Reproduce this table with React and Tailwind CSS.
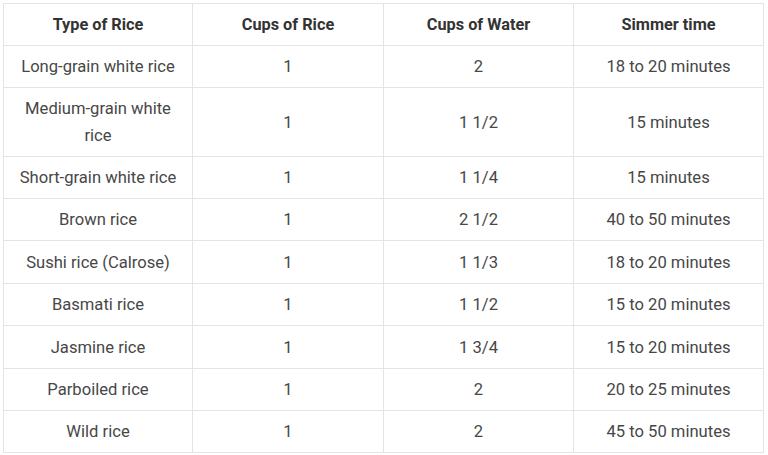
import React from "react";

const rows = [
  ["Long-grain white rice", "1", "2", "18 to 20 minutes"],
  ["Medium-grain white rice", "1", "1 1/2", "15 minutes"],
  ["Short-grain white rice", "1", "1 1/4", "15 minutes"],
  ["Brown rice", "1", "2 1/2", "40 to 50 minutes"],
  ["Sushi rice (Calrose)", "1", "1 1/3", "18 to 20 minutes"],
  ["Basmati rice", "1", "1 1/2", "15 to 20 minutes"],
  ["Jasmine rice", "1", "1 3/4", "15 to 20 minutes"],
  ["Parboiled rice", "1", "2", "20 to 25 minutes"],
  ["Wild rice", "1", "2", "45 to 50 minutes"],
];

const heights = ["h-[42px]", "h-[69px]", "h-[42px]", "h-[42px]", "h-[43px]", "h-[42px]", "h-[43px]", "h-[42px]", "h-[42px]"];

export default function App() {
  return (
    <div className="w-[768px] h-[455px] bg-white pt-[3px] pl-[3px] overflow-hidden" style={{ fontFamily: "Roboto, 'Liberation Sans', sans-serif" }}>
      <table className="w-[760px] table-fixed border-collapse text-[16.6px] text-[#474747]">
        <colgroup>
          <col className="w-[189px]" />
          <col className="w-[191px]" />
          <col className="w-[190px]" />
          <col className="w-[190px]" />
        </colgroup>
        <thead>
          <tr className="h-[42px]">
            {["Type of Rice", "Cups of Rice", "Cups of Water", "Simmer time"].map((h) => (
              <th key={h} className="border border-[#e4e4e4] px-3 py-0 text-center text-[16.3px] font-bold text-[#333] leading-[27px]">
                {h}
              </th>
            ))}
          </tr>
        </thead>
        <tbody>
          {rows.map((r, i) => (
            <tr key={i} className={heights[i]}>
              {r.map((c, j) => (
                <td key={j} className="border border-[#e4e4e4] px-3 py-0 text-center leading-[27px]">
                  {c}
                </td>
              ))}
            </tr>
          ))}
        </tbody>
      </table>
    </div>
  );
}
